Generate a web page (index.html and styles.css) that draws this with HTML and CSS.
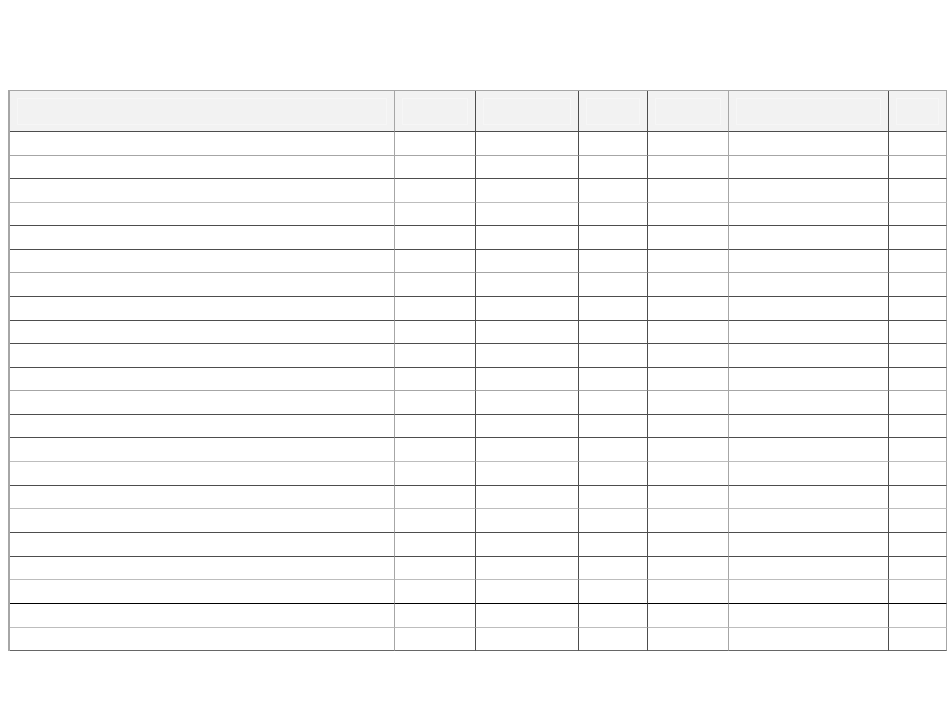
FILE: index.html
```html
<!DOCTYPE html>
<html>
<head>
<meta charset="utf-8">
<link rel="stylesheet" href="styles.css">
</head>
<body>
<div class="page">
<table class="grid">
  <thead>
    <tr class="head bd">
      <th class="c1 cl"><div class="ib"></div></th>
      <th class="c2 cd"><div class="ib"></div></th>
      <th class="c3 cd"><div class="ib"></div></th>
      <th class="c4 cd"><div class="ib"></div></th>
      <th class="c5 cl"><div class="ib"></div></th>
      <th class="c6 cd"><div class="ib"></div></th>
      <th class="c7 cl"><div class="ib"></div></th>
    </tr>
  </thead>
  <tbody>
    <tr class="h24 bl"><td class="cl"></td><td class="cd"></td><td class="cd"></td><td class="cd"></td><td class="cl"></td><td class="cd"></td><td class="cl"></td></tr>
    <tr class="h23 bd"><td class="cl"></td><td class="cd"></td><td class="cd"></td><td class="cd"></td><td class="cl"></td><td class="cd"></td><td class="cl"></td></tr>
    <tr class="h24 bx"><td class="cl"></td><td class="cd"></td><td class="cd"></td><td class="cd"></td><td class="cl"></td><td class="cd"></td><td class="cl"></td></tr>
    <tr class="h23 bd"><td class="cl"></td><td class="cd"></td><td class="cd"></td><td class="cd"></td><td class="cl"></td><td class="cd"></td><td class="cl"></td></tr>
    <tr class="h24 bd"><td class="cl"></td><td class="cd"></td><td class="cd"></td><td class="cd"></td><td class="cl"></td><td class="cd"></td><td class="cl"></td></tr>
    <tr class="h23 bl"><td class="cl"></td><td class="cd"></td><td class="cd"></td><td class="cd"></td><td class="cl"></td><td class="cd"></td><td class="cl"></td></tr>
    <tr class="h24 bd"><td class="cl"></td><td class="cd"></td><td class="cd"></td><td class="cd"></td><td class="cl"></td><td class="cd"></td><td class="cl"></td></tr>
    <tr class="h24 bd"><td class="cl"></td><td class="cd"></td><td class="cd"></td><td class="cd"></td><td class="cl"></td><td class="cd"></td><td class="cl"></td></tr>
    <tr class="h23 bd"><td class="cl"></td><td class="cd"></td><td class="cd"></td><td class="cd"></td><td class="cl"></td><td class="cd"></td><td class="cl"></td></tr>
    <tr class="h24 bd"><td class="cl"></td><td class="cd"></td><td class="cd"></td><td class="cd"></td><td class="cl"></td><td class="cd"></td><td class="cl"></td></tr>
    <tr class="h23 bl"><td class="cl"></td><td class="cd"></td><td class="cd"></td><td class="cd"></td><td class="cl"></td><td class="cd"></td><td class="cl"></td></tr>
    <tr class="h24 bd"><td class="cl"></td><td class="cd"></td><td class="cd"></td><td class="cd"></td><td class="cl"></td><td class="cd"></td><td class="cl"></td></tr>
    <tr class="h23 bd"><td class="cl"></td><td class="cd"></td><td class="cd"></td><td class="cd"></td><td class="cl"></td><td class="cd"></td><td class="cl"></td></tr>
    <tr class="h24 bx"><td class="cl"></td><td class="cd"></td><td class="cd"></td><td class="cd"></td><td class="cl"></td><td class="cd"></td><td class="cl"></td></tr>
    <tr class="h24 bd"><td class="cl"></td><td class="cd"></td><td class="cd"></td><td class="cd"></td><td class="cl"></td><td class="cd"></td><td class="cl"></td></tr>
    <tr class="h23 bx"><td class="cl"></td><td class="cd"></td><td class="cd"></td><td class="cd"></td><td class="cl"></td><td class="cd"></td><td class="cl"></td></tr>
    <tr class="h24 bd"><td class="cl"></td><td class="cd"></td><td class="cd"></td><td class="cd"></td><td class="cl"></td><td class="cd"></td><td class="cl"></td></tr>
    <tr class="h24 bd"><td class="cl"></td><td class="cd"></td><td class="cd"></td><td class="cd"></td><td class="cl"></td><td class="cd"></td><td class="cl"></td></tr>
    <tr class="h23 bx"><td class="cl"></td><td class="cd"></td><td class="cd"></td><td class="cd"></td><td class="cl"></td><td class="cd"></td><td class="cl"></td></tr>
    <tr class="h24 bk"><td class="cl"></td><td class="cd"></td><td class="cd"></td><td class="cd"></td><td class="cl"></td><td class="cd"></td><td class="cl"></td></tr>
    <tr class="h24 bx"><td class="cl"></td><td class="cd"></td><td class="cd"></td><td class="cd"></td><td class="cl"></td><td class="cd"></td><td class="cl"></td></tr>
    <tr class="h23 bm"><td class="cl"></td><td class="cd"></td><td class="cd"></td><td class="cd"></td><td class="cl"></td><td class="cd"></td><td class="cl"></td></tr>
  </tbody>
</table>
</div>
</body>
</html>
```
FILE: styles.css
```css
html, body {
  margin: 0;
  padding: 0;
  background: #ffffff;
  font-family: "Liberation Sans", Arial, sans-serif;
}

.page {
  padding: 90px 0 0 8px;
}

.grid {
  border-collapse: separate;
  border-spacing: 0;
  table-layout: fixed;
  width: 939px;
  border-left: 2px solid #a6a6a6;
  border-top: 1px solid #a6a6a6;
}

.grid th,
.grid td {
  box-sizing: border-box;
  padding: 0;
  border-right: 1px solid #4d4d4d;
  border-bottom: 1px solid #4d4d4d;
}

.grid .cl { border-right-color: #a6a6a6; }
.grid .cd { border-right-color: #4d4d4d; }

.c1 { width: 385px; }
.c2 { width: 81px; }
.c3 { width: 103px; }
.c4 { width: 69px; }
.c5 { width: 81px; }
.c6 { width: 160px; }
.c7 { width: 58px; }

.head th {
  height: 41px;
  background: #f2f2f2;
  vertical-align: middle;
}

.ib {
  margin: 6px 7px 6px 7px;
  height: 25px;
  border: 1px solid #f6f6f6;
}

.h24 td { height: 24px; }
.h23 td { height: 23px; }

.bd td, .bd th { border-bottom-color: #4d4d4d; }
.bl td { border-bottom-color: #a6a6a6; }
.bx td { border-bottom-color: #bdbdbd; }
.bk td { border-bottom-color: #000000; }
.bm td { border-bottom-color: #666666; }
```
